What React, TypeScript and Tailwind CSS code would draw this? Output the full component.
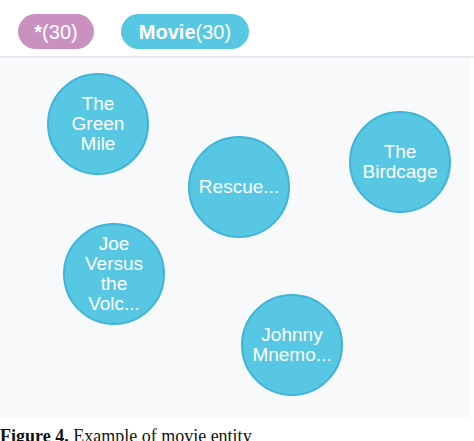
import React from "react";

const nodes = [
  { label: ["The", "Green", "Mile"], cx: 98, cy: 126 },
  { label: ["Rescue..."], cx: 239, cy: 189 },
  { label: ["The", "Birdcage"], cx: 400, cy: 164 },
  { label: ["Joe", "Versus", "the", "Volc..."], cx: 114, cy: 276 },
  { label: ["Johnny", "Mnemo..."], cx: 292, cy: 347 },
];

export default function App() {
  return (
    <div className="w-[474px] h-[441px] bg-white overflow-hidden">
      <div className="h-[58px] flex items-start gap-[27px] pl-[18px] pt-[14px] border-b-2 border-[#e8ebf0] font-['Liberation_Sans',Arial,sans-serif]">
        <div className="w-[76px] h-[35px] rounded-full bg-[#c990c0] text-white text-[20px] flex items-center justify-center">
          <span className="font-bold">*</span>
          <span>(30)</span>
        </div>
        <div className="w-[128px] h-[35px] rounded-full bg-[#57c7e3] text-white text-[20px] flex items-center justify-center">
          <span className="font-bold">Movie</span>
          <span>(30)</span>
        </div>
      </div>
      <div className="relative h-[360px] mr-[4px] bg-[#f8f9fb] font-['Liberation_Sans',Arial,sans-serif]">
        {nodes.map((n, i) => (
          <div
            key={i}
            className="absolute w-[102px] h-[102px] rounded-full bg-[#57c7e3] border-2 border-[#3fb4d8] flex flex-col items-center justify-center text-white text-[19px] leading-[20px] text-center"
            style={{ left: n.cx - 51, top: n.cy - 60 - 51 }}
          >
            {n.label.map((l, j) => (
              <span key={j}>{l}</span>
            ))}
          </div>
        ))}
      </div>
      <div className="pt-[9px] text-[18px] leading-[18px] text-[#111] font-['Liberation_Serif','Times_New_Roman',serif]">
        <span className="font-bold">Figure 4.</span> Example of movie entity
      </div>
    </div>
  );
}
